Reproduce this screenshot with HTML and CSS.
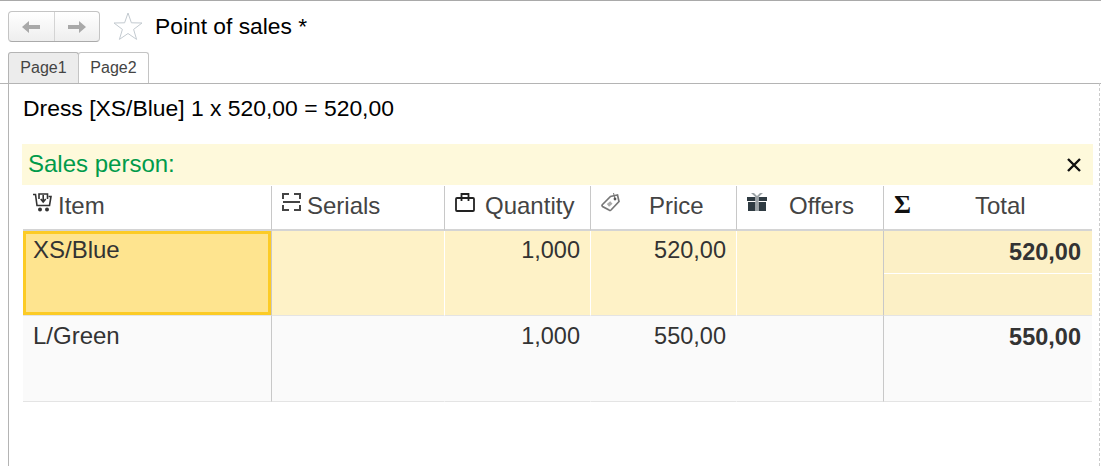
FILE: index.html
```html
<!DOCTYPE html>
<html lang="en">
<head>
    <meta charset="UTF-8">
    <meta name="viewport" content="width=device-width, initial-scale=1.0">
    <title>Point of sales</title>
    <link rel="stylesheet" href="styles.css">
</head>
<body>

    <div class="toolbar">
        <div class="nav-group">
            <button class="nav-btn">
                <svg width="18" height="12" viewBox="0 0 18 12"><path d="M0 6l7-6v4h11v4H7v4z" fill="#a9a9a9"/></svg>
            </button>
            <button class="nav-btn">
                <svg width="18" height="12" viewBox="0 0 18 12"><path d="M18 6l-7-6v4H0v4h11v4z" fill="#a9a9a9"/></svg>
            </button>
        </div>
        <svg class="star" width="30" height="28" viewBox="0 0 30 28"><path d="M15 1l3.400 9.800 10.600.2-8.400 6.400 3 10-8.600-5.900-8.600 5.900 3-10L1 11l10.600-.2z" fill="#fff" stroke="#c3cad0"/></svg>
        <div class="title">Point of sales *</div>
    </div>

    <div class="tabs">
        <div class="tab">Page1</div>
        <div class="tab active">Page2</div>
    </div>

    <div class="panel">
        <div class="summary">Dress [XS/Blue] 1 x 520,00 = 520,00</div>

        <div class="sales-bar">
            <span>Sales person:</span>
            <svg width="16" height="16" viewBox="0 0 16 16"><path d="M2 2l12 12M14 2L2 14" stroke="#111" stroke-width="2.400"/></svg>
        </div>

        <div class="grid">
            <div class="head-cell">
                <svg class="head-icon icon-item" width="20" height="20" viewBox="0 0 20 20">
                    <path d="M0 1.500h2.500l1.500 11h12.500l1.500-9h-2.500" fill="none" stroke="#333" stroke-width="1.600"/>
                    <path d="M6 6V1h8.500v5M10.200 2v6.500M7.700 6l2.500 3 2.500-3" fill="none" stroke="#333" stroke-width="1.600"/>
                    <circle cx="7" cy="16.500" r="2" fill="#333"/><circle cx="14" cy="16.500" r="2" fill="#333"/>
                </svg>
                <span>Item</span>
            </div>
            <div class="head-cell">
                <svg class="head-icon icon-serials" width="20" height="20" viewBox="0 0 20 20">
                    <path d="M1 6V1h6M12 1h6v5M1 12v5h6M12 17h6v-5M1 9h17" fill="none" stroke="#444" stroke-width="2"/>
                </svg>
                <span>Serials</span>
            </div>
            <div class="head-cell">
                <svg class="head-icon icon-qty" width="20" height="20" viewBox="0 0 20 20">
                    <rect x="1" y="5" width="18" height="13" rx="1" fill="none" stroke="#222" stroke-width="1.800"/>
                    <path d="M6.500 8V1h7v7" fill="none" stroke="#222" stroke-width="1.800"/>
                </svg>
                <span>Quantity</span>
            </div>
            <div class="head-cell">
                <svg class="head-icon icon-price" width="20" height="20" viewBox="0 0 20 20">
                    <path d="M1.500 11.500l8-8 7-1.500 1.500 6.500-8 8.500q-1 1-2 0l-6.500-3.500q-1-1 0-2z" fill="none" stroke="#777" stroke-width="1.700"/>
                    <rect x="6.500" y="9" width="4.500" height="3.500" fill="#aaa" transform="rotate(-40 9 11)"/>
                    <path d="M14 6L12.500 0" stroke="#777"/><circle cx="14" cy="6" r="1.400" fill="#555"/>
                </svg>
                <span>Price</span>
            </div>
            <div class="head-cell">
                <svg class="head-icon icon-offers" width="20" height="20" viewBox="0 0 20 20">
                    <path d="M0 4h8.500v4H0zM11.500 4H20v4h-8.500zM1 9h7.500v9H1zM11.500 9H19v9h-7.500z" fill="#2f3b42"/>
                    <path d="M8.500 4L4 0h3l3 3 3-3h3l-4.500 4zM8.500 4h3v14h-3z" fill="#9ba2a6"/>
                </svg>
                <span>Offers</span>
            </div>
            <div class="head-cell last">
                <span class="head-icon sigma">&Sigma;</span>
                <span>Total</span>
            </div>

            <div class="row selected">
                <div class="cell"><div class="current">XS/Blue</div></div>
                <div class="cell"></div>
                <div class="cell num">1,000</div>
                <div class="cell num">520,00</div>
                <div class="cell"></div>
                <div class="cell total"><b>520,00</b></div>
            </div>

            <div class="row plain">
                <div class="cell">L/Green</div>
                <div class="cell"></div>
                <div class="cell num">1,000</div>
                <div class="cell num">550,00</div>
                <div class="cell"></div>
                <div class="cell total"><b>550,00</b></div>
            </div>
        </div>
    </div>

</body>
</html>
```

FILE: styles.css
```css
* { box-sizing: border-box; }
html, body { height: 100%; }
body {
    margin: 0;
    font-family: "Liberation Sans", Arial, sans-serif;
    background: #fff;
    color: #333;
    overflow: hidden;
    display: flex;
    flex-direction: column;
}
.toolbar {
    height: 52px;
    border-top: 1px solid #a9a9a9;
    padding: 10px 0 0 8px;
    display: flex;
    align-items: flex-start;
    flex-shrink: 0;
}
.nav-group {
    width: 92px;
    height: 31px;
    display: flex;
    border: 1px solid #c4c4c4;
    border-bottom-color: #aaa;
    border-radius: 4px;
    background: linear-gradient(#fff, #eee);
}
.nav-btn {
    flex: 1;
    padding: 0;
    border: none;
    background: none;
    display: flex;
    align-items: center;
    justify-content: center;
}
.nav-btn + .nav-btn { border-left: 1px solid #d4d4d4; }
.star { margin-left: 13px; margin-top: 1px; }
.title {
    margin-left: 12px;
    font-size: 22.8px;
    line-height: 30px;
    color: #000;
}
.tabs {
    height: 32px;
    padding-left: 8px;
    display: flex;
    flex-shrink: 0;
    border-bottom: 1px solid #b4b4b4;
    margin-bottom: -1px;
}
.tab {
    width: 71px;
    height: 31px;
    font-size: 16px;
    line-height: 30px;
    text-align: center;
    color: #444;
    background: #ececec;
    border: 1px solid #b4b4b4;
    border-bottom: none;
    border-radius: 3px 3px 0 0;
}
.tab.active {
    height: 32px;
    margin-left: -1px;
    background: #fff;
    border-color: #c4c4c4;
}
.panel {
    flex: 1;
    margin-left: 8px;
    margin-right: 1px;
    padding: 0 6px 0 13px;
    border-left: 1px solid #b4b4b4;
    border-right: 1px dashed #ccc;
    border-top: 1px solid #b4b4b4;
}
.summary {
    height: 60px;
    padding: 10px 0 0 1px;
    font-size: 22.9px;
    line-height: 28px;
    color: #000;
}
.sales-bar {
    height: 41px;
    padding: 0 11px 2px 6px;
    background: #fef9db;
    color: #009b4b;
    font-size: 24px;
    display: flex;
    align-items: center;
    justify-content: space-between;
}
.sales-bar svg { margin-top: 2px; }
.grid {
    margin: 1px 1px 0;
    display: grid;
    grid-template-columns: 249px 173px 146px 146px 147px 208px;
}
.head-cell {
    height: 45px;
    display: flex;
    align-items: flex-start;
    padding: 5px 0 0 10px;
    border-right: 1px solid #c8c8c8;
    border-bottom: 2px solid #d4d4d4;
    font-size: 24px;
    line-height: 30px;
    color: #444;
}
.head-cell.last { border-right: none; }
.head-icon { flex-shrink: 0; margin-top: 2px; }
.icon-item { margin-right: 5px; }
.icon-serials { margin-right: 5px; }
.icon-qty { margin-right: 10px; }
.icon-price { margin-right: 28px; }
.icon-offers { margin-right: 22px; }
.sigma {
    width: 20px;
    margin-right: 61px;
    font-family: "Liberation Serif", serif;
    font-weight: bold;
    font-size: 26px;
    line-height: 24px;
    color: #111;
}
.row { display: contents; }
.cell {
    height: 86px;
    padding: 5px 11px 0 10px;
    font-size: 24px;
    line-height: 30px;
    color: #333;
    background: #fafafa;
    border-right: 1px solid #fafafa;
    border-bottom: 1px solid #e4e4e4;
}
.cell:nth-child(1), .cell:nth-child(5) { border-right-color: #c8c8c8; }
.cell:last-child { border-right: none; }
.num { text-align: right; font-size: 23.5px; padding-right: 10px; }
.cell.total { text-align: right; padding-top: 6px; font-size: 23.5px; }
.selected .cell {
    height: 85px;
    padding-top: 4px;
    background: #fef2c7;
    border-right-color: #fff;
}
.selected .cell:nth-child(1), .selected .cell:nth-child(5) { border-right-color: #c8c8c8; }
.selected .cell.total {
    padding-top: 6px;
    background: linear-gradient(#fcf0c6 0 42px, #fff 42px 43px, #fcf0c6 43px);
}
.selected .cell:first-child { padding: 0; }
.current {
    height: 100%;
    padding: 1px 0 0 7px;
    background: #fee48f;
    border: 3px solid #fccb25;
}
```
